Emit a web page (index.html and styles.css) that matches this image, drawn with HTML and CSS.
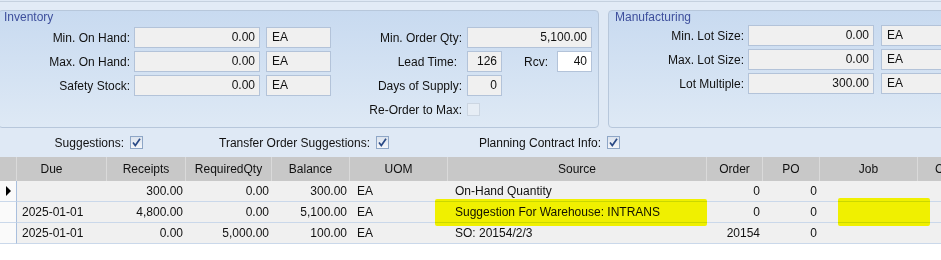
FILE: index.html
```html
<!DOCTYPE html>
<html lang="en">
  <head>
    <meta charset="UTF-8" />
    <title>Planning</title>
    <link rel="stylesheet" href="styles.css">
  </head>
  <body>
    <div class="top"></div>

    <div class="panels">
      <div class="group inventory">
        <div class="group-title">Inventory</div>
        <div class="inv-body">
          <div class="form form-left">
            <div class="label">Min. On Hand:</div>
            <div class="field num">0.00</div>
            <div class="field uom">EA</div>

            <div class="label">Max. On Hand:</div>
            <div class="field num">0.00</div>
            <div class="field uom">EA</div>

            <div class="label">Safety Stock:</div>
            <div class="field num">0.00</div>
            <div class="field uom">EA</div>
          </div>

          <div class="form form-mid">
            <div class="label">Min. Order Qty:</div>
            <div class="field num">5,100.00</div>

            <div class="label lead">Lead Time:</div>
            <div class="split">
              <div class="field num short">126</div>
              <div class="rcv-label">Rcv:</div>
              <div class="field num short white">40</div>
            </div>

            <div class="label">Days of Supply:</div>
            <div class="split">
              <div class="field num short">0</div>
            </div>

            <div class="label">Re-Order to Max:</div>
            <div class="split">
              <span class="check off"></span>
            </div>
          </div>
        </div>
      </div>

      <div class="group manufacturing">
        <div class="group-title">Manufacturing</div>
        <div class="form form-mfg">
          <div class="label">Min. Lot Size:</div>
          <div class="field num">0.00</div>
          <div class="field uom">EA</div>

          <div class="label">Max. Lot Size:</div>
          <div class="field num">0.00</div>
          <div class="field uom">EA</div>

          <div class="label">Lot Multiple:</div>
          <div class="field num">300.00</div>
          <div class="field uom">EA</div>
        </div>
      </div>
    </div>

    <div class="options">
      <div class="opt opt-1">
        Suggestions:
        <span class="check"><svg viewBox="0 0 11 11" width="11" height="11"><path d="M2 5.5 L4.3 8.5 L9 1.8" /></svg></span>
      </div>
      <div class="opt opt-2">
        Transfer Order Suggestions:
        <span class="check"><svg viewBox="0 0 11 11" width="11" height="11"><path d="M2 5.5 L4.3 8.5 L9 1.8" /></svg></span>
      </div>
      <div class="opt opt-3">
        Planning Contract Info:
        <span class="check"><svg viewBox="0 0 11 11" width="11" height="11"><path d="M2 5.5 L4.3 8.5 L9 1.8" /></svg></span>
      </div>
    </div>

    <div class="grid">
      <div class="row head">
        <div></div>
        <div class="due-head">Due</div>
        <div>Receipts</div>
        <div>RequiredQty</div>
        <div>Balance</div>
        <div>UOM</div>
        <div>Source</div>
        <div>Order</div>
        <div>PO</div>
        <div>Job</div>
        <div class="last-head">Contract</div>
      </div>

      <div class="row data">
        <div class="rh"><span class="arrow"></span></div>
        <div></div>
        <div class="r">300.00</div>
        <div class="r">0.00</div>
        <div class="r">300.00</div>
        <div class="txt">EA</div>
        <div class="txt">On-Hand Quantity</div>
        <div class="r">0</div>
        <div class="r">0</div>
        <div></div>
        <div></div>
      </div>

      <div class="row data">
        <div class="rh"></div>
        <div>2025-01-01</div>
        <div class="r">4,800.00</div>
        <div class="r">0.00</div>
        <div class="r">5,100.00</div>
        <div class="txt">EA</div>
        <div class="txt">Suggestion For Warehouse: INTRANS</div>
        <div class="r">0</div>
        <div class="r">0</div>
        <div></div>
        <div></div>
      </div>

      <div class="row data">
        <div class="rh"></div>
        <div>2025-01-01</div>
        <div class="r">0.00</div>
        <div class="r">5,000.00</div>
        <div class="r">100.00</div>
        <div class="txt">EA</div>
        <div class="txt">SO: 20154/2/3</div>
        <div class="r">20154</div>
        <div class="r">0</div>
        <div></div>
        <div></div>
      </div>

      <span class="hl hl-source"></span>
      <span class="hl hl-job"></span>
    </div>
  </body>
</html>
```

FILE: styles.css
```css
* {
  margin: 0;
  padding: 0;
  box-sizing: border-box;
}

body {
  font-family: "Liberation Sans", Arial, sans-serif;
  font-size: 12px;
  color: #111;
  background-color: #dfe9f5;
  width: 941px;
  height: 260px;
  overflow: hidden;
}

.top {
  height: 9px;
  margin-top: 1px;
  border-top: 1px solid #c5d1df;
  background-color: #e2ebf6;
}

/* group boxes */

.panels {
  display: flex;
  height: 118px;
}

.group {
  border: 1px solid #b7c7db;
  border-radius: 4px;
  background: linear-gradient(#c8daf0, #dee9f5);
}

.inventory {
  width: 601px;
  margin-left: -2px;
}

.manufacturing {
  flex: 1;
  margin-left: 9px;
  margin-right: -6px;
}

.group-title {
  color: #3e4f9c;
  padding-left: 5px;
  line-height: 12px;
  height: 12px;
}

.manufacturing .group-title {
  padding-left: 6px;
}

.inv-body {
  display: flex;
  margin-top: 4px;
}

.form {
  display: grid;
  grid-auto-rows: 21px;
  row-gap: 3px;
  align-items: center;
}

.form-left {
  grid-template-columns: 135px 126px 71px;
}

.form-mid {
  grid-template-columns: 136px 125px;
}

.form-mfg {
  margin-top: 2px;
  grid-template-columns: 139px 126px 1fr;
}

.label {
  text-align: right;
  white-space: nowrap;
  padding-right: 4px;
}

.form-mid .label {
  padding-right: 5px;
}

.form-mid .lead {
  padding-right: 10px;
}

.field {
  height: 21px;
  border: 1px solid #b3c3d9;
  background-color: #f0f0f0;
  padding: 0 4px;
  line-height: 19px;
  white-space: nowrap;
}

.num {
  text-align: right;
}

.uom {
  margin-left: 6px;
  padding-left: 5px;
}

.form-mfg .uom {
  margin-left: 7px;
}

.white {
  background-color: #fff;
}

.split {
  display: flex;
  align-items: center;
  height: 21px;
}

.short {
  width: 35px;
}

.rcv-label {
  margin-left: auto;
  margin-right: 9px;
}

/* checkboxes */

.check {
  display: inline-flex;
  align-items: center;
  justify-content: center;
  width: 13px;
  height: 13px;
  border: 1px solid #8ea6c6;
  background: linear-gradient(#dbe3ee, #f5f7fa);
}

.check path {
  fill: none;
  stroke: #2a4a86;
  stroke-width: 1.7;
}

.check.off {
  border-color: #ccd6e2;
  background: #e6edf5;
}

.options {
  display: flex;
  height: 29px;
  align-items: center;
}

.opt {
  display: flex;
  justify-content: flex-end;
  align-items: center;
  gap: 6px;
  white-space: nowrap;
}

.opt-1 {
  width: 143px;
}

.opt-2 {
  width: 246px;
}

.opt-3 {
  width: 231px;
}

/* data grid */

.grid {
  position: relative;
  background-color: #fff;
  height: 104px;
  overflow: hidden;
}

.row {
  display: grid;
  grid-template-columns: 17px 90px 79px 86px 78px 98px 259px 56px 57px 98px 60px;
}

.head {
  height: 24px;
  background-color: #c8c8c8;
}

.head > div {
  border-right: 1px solid #dadada;
  text-align: center;
  line-height: 24px;
  white-space: nowrap;
  overflow: hidden;
}

.head .due-head {
  padding-right: 20px;
}

.head .last-head {
  text-align: left;
  padding-left: 17px;
}

.data {
  height: 21px;
}

.data > div {
  background-color: #f0f0f0;
  border-bottom: 1px solid #cad8ea;
  line-height: 20px;
  padding: 0 4px 0 5px;
  white-space: nowrap;
  overflow: hidden;
}

.data > .rh {
  display: flex;
  align-items: center;
  padding-left: 6px;
  background-color: #fafafa;
  border-right: 1px solid #a9bfdd;
}

.data > .txt {
  padding-left: 7px;
}

.data > .r {
  text-align: right;
  padding-right: 3px;
}

.arrow {
  width: 0;
  height: 0;
  border-left: 5px solid #000;
  border-top: 5px solid transparent;
  border-bottom: 5px solid transparent;
}

.hl {
  position: absolute;
  background-color: #ffff00;
  mix-blend-mode: multiply;
  border-radius: 2px;
}

.hl-source {
  left: 435px;
  top: 42px;
  width: 272px;
  height: 27px;
}

.hl-job {
  left: 838px;
  top: 41px;
  width: 92px;
  height: 28px;
}
```
